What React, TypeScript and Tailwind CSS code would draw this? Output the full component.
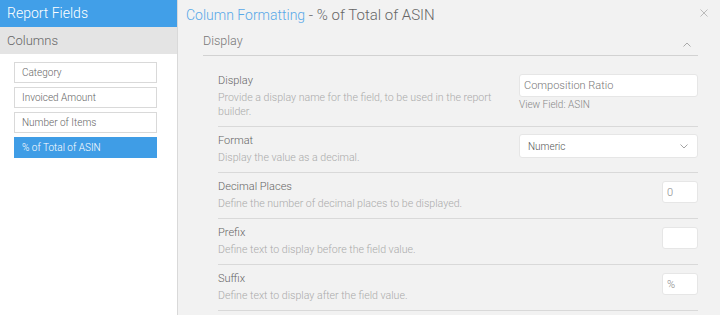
import React from 'react';

const columns = ['Category', 'Invoiced Amount', 'Number of Items', '% of Total of ASIN'];

type Row = {
  label: string;
  desc: string;
  control: React.ReactNode;
};

const smallInput = (value: string) => (
  <input
    readOnly
    value={value}
    className="mt-[2px] h-[22px] w-[36px] rounded-[3px] border border-[#e6e6e6] bg-white px-[4px] text-[11px] text-[#888] outline-none"
  />
);

const rows: Row[] = [
  {
    label: 'Display',
    desc: 'Provide a display name for the field, to be used in the report builder.',
    control: (
      <div className="mt-[1px] flex w-[179px] flex-col">
        <input
          readOnly
          value="Composition Ratio"
          className="h-[23px] w-full rounded-[3px] border border-[#e6e6e6] bg-white px-[4px] text-[11px] text-[#777] outline-none"
        />
        <span className="mt-[1px] text-[10px] leading-[13px] text-[#888]">View Field: ASIN</span>
      </div>
    ),
  },
  {
    label: 'Format',
    desc: 'Display the value as a decimal.',
    control: (
      <div className="mt-[1px] flex h-[24px] w-[179px] items-center justify-between rounded-[3px] border border-[#e6e6e6] bg-white pl-[8px] pr-[9px] text-[10px] text-[#555]">
        <span>Numeric</span>
        <svg width="8" height="5" viewBox="0 0 8 5" fill="none" stroke="#999" strokeWidth="0.9">
          <polyline points="0.5,0.5 4,4 7.5,0.5" />
        </svg>
      </div>
    ),
  },
  {
    label: 'Decimal Places',
    desc: 'Define the number of decimal places to be displayed.',
    control: smallInput('0'),
  },
  {
    label: 'Prefix',
    desc: 'Define text to display before the field value.',
    control: smallInput(''),
  },
  {
    label: 'Suffix',
    desc: 'Define text to display after the field value.',
    control: smallInput('%'),
  },
];

const App: React.FC = () => {
  return (
    <div className="flex h-[315px] w-[720px] overflow-hidden font-['Roboto',sans-serif] font-light">
      {/* colonne de gauche */}
      <aside className="w-[178px] shrink-0 border-r border-[#d9d9d9] bg-white">
        <div className="h-[27px] bg-[#419fe8] pl-[7px] text-[14px] leading-[27px] text-white">
          Report Fields
        </div>
        <div className="h-[27px] bg-[#e4e4e4] pl-[7px] text-[13px] leading-[27px] text-[#666]">
          Columns
        </div>
        <ul className="flex flex-col gap-[4px] pl-[14px] pr-[20px] pt-[8px]">
          {columns.map((col, i) => (
            <li
              key={col}
              className={
                i === columns.length - 1
                  ? 'h-[21px] border border-[#3f9de6] bg-[#3f9de6] pl-[7px] text-[10px] leading-[19px] text-white'
                  : 'h-[21px] border border-[#d9d9d9] bg-white pl-[7px] text-[10px] leading-[19px] text-[#666]'
              }
            >
              {col}
            </li>
          ))}
        </ul>
      </aside>

      {/* panneau principal */}
      <main className="relative flex-1 bg-[#f2f2f2]">
        <div className="flex h-[30px] items-center pl-[8px] text-[14px] text-[#666]">
          <span className="text-[#58a8e8]">Column Formatting</span>
          <span className="text-[15px]">&nbsp;- % of Total of ASIN</span>
        </div>
        <svg
          className="absolute right-[12px] top-[9px]"
          width="8"
          height="8"
          viewBox="0 0 8 8"
          stroke="#bbb"
          strokeWidth="1"
        >
          <line x1="0.5" y1="0.5" x2="7.5" y2="7.5" />
          <line x1="7.5" y1="0.5" x2="0.5" y2="7.5" />
        </svg>

        <section className="ml-[25px] mr-[22px]">
          <div className="flex h-[26px] items-start justify-between border-b border-[#d2d2d2] pr-[7px] pt-[3px]">
            <span className="text-[12.5px] leading-[16px] text-[#777]">Display</span>
            <svg className="mt-[9px]" width="8" height="5" viewBox="0 0 8 5" fill="none" stroke="#aaa" strokeWidth="1">
              <polyline points="0.5,4.5 4,1 7.5,4.5" />
            </svg>
          </div>

          <div className="pl-[15px] pt-[11px]">
            {rows.map((row) => (
              <div key={row.label} className="flex justify-between border-b border-[#d9d9d9] pb-[7px] pt-[6px]">
                <div className="w-[290px]">
                  <div className="text-[11px] leading-[16px] text-[#666]">{row.label}</div>
                  <div className="mt-[2px] text-[10.6px] leading-[14px] text-[#aaa]">{row.desc}</div>
                </div>
                {row.control}
              </div>
            ))}
          </div>
        </section>
      </main>
    </div>
  );
};

export default App;
